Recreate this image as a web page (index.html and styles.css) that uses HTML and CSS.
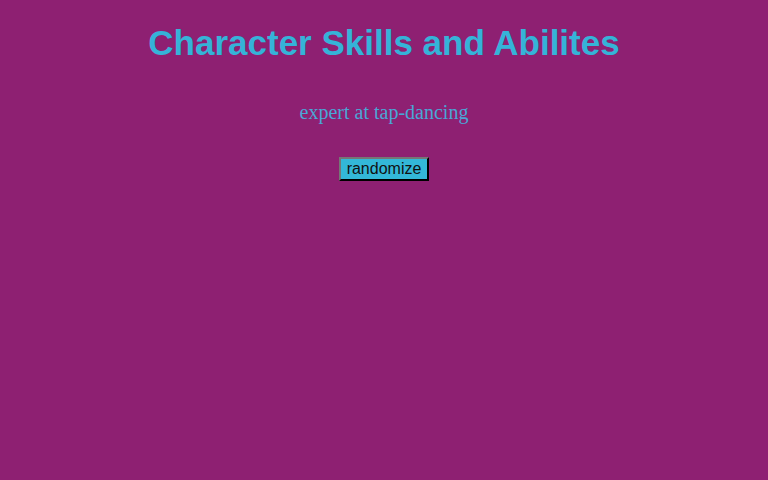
FILE: index.html
```html
<!DOCTYPE html>
<html lang="en">
<head>
    <meta charset="UTF-8">
    <meta name="viewport" content="width=device-width, initial-scale=1.0">
    <title>Character Skills and Abilites</title>
    <link rel="stylesheet" href="styles.css">
</head>
<body>

    <h1>Character Skills and Abilites</h1>
    <p class="skill" id="skill">expert at tap-dancing</p>
    <button type="button" class="randomize" onclick="randomize()">randomize</button>

    <script>
        const skills = [
            "expert at tap-dancing",
            "can juggle five flaming torches",
            "speaks fluent dolphin",
            "master lockpicker",
            "never loses at chess",
            "bakes a perfect sourdough"
        ];

        function randomize() {
            const i = Math.floor(Math.random() * skills.length);
            document.getElementById('skill').innerText = skills[i];
        }
    </script>
</body>
</html>
```

FILE: styles.css
```css
body {
    background-color: #8e2072;
    margin: 0;
    text-align: center;
    color: #35b3d8;
}
h1 {
    font-family: "Liberation Sans", Arial, sans-serif;
    font-size: 35px;
    margin: 23px 0 0;
}
.skill {
    font-family: "Liberation Serif", "Times New Roman", serif;
    font-size: 20px;
    color: #4aa6d6;
    margin: 38px 0 33px;
}
.randomize {
    font-family: "Liberation Sans", Arial, sans-serif;
    font-size: 16px;
    color: #111;
    background-color: #33b8d8;
    border: 2px outset #222;
    padding: 1px 6px;
    cursor: pointer;
}
```
